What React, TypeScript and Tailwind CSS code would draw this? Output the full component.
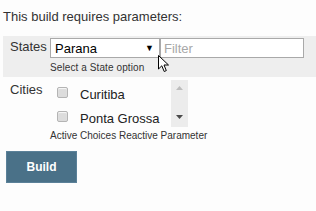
import React from "react";

function Checkbox() {
  return (
    <span className="inline-block w-[11px] h-[11px] rounded-[2px] border border-[#b4b4b4] bg-[#dcdcdc] shadow-[inset_0_1px_1px_rgba(255,255,255,0.8)]" />
  );
}

export default function App() {
  return (
    <div className="relative w-[316px] h-[211px] bg-[#fdfdfd] text-[#333] overflow-hidden" style={{ fontFamily: '"Liberation Sans", Arial, sans-serif' }}>
      <div className="pl-[3px] pt-[9px] text-[13px] leading-[15px] text-[#333]">This build requires parameters:</div>
      <div className="ml-[3px] mt-[12px] h-[41px] bg-[#eeeeee] flex pt-[2px]">
        <div className="w-[47px] pl-[7px] text-[13px] leading-[15px] pt-[1px]">States</div>
        <div className="flex flex-col">
          <div className="flex">
            <div className="w-[110px] h-[20px] bg-white border border-[#a9a9a9] flex items-center pl-[4px] pr-[5px] justify-between">
              <span className="text-[13px] text-black leading-[15px]">Parana</span>
              <span className="text-[9px] text-black leading-none">▼</span>
            </div>
            <div className="w-[144px] h-[20px] bg-white border border-[#a9a9a9] flex items-center pl-[3px]">
              <span className="text-[13px] text-[#a8a8a8] leading-[15px]">Filter</span>
            </div>
          </div>
          <div className="text-[10px] leading-[12px] mt-[4px] text-[#333] tracking-[0.1px]">Select a State option</div>
        </div>
      </div>
      <div className="flex pt-[5px]">
        <div className="w-[50px] pl-[10px] text-[13px] leading-[15px]">Cities</div>
        <div className="flex flex-col">
          <div className="flex h-[47px] mt-[-2px]">
            <div className="w-[121px] flex flex-col pl-[7px] pt-[6px] gap-[12px]">
              <div className="flex items-center gap-[12px] h-[12px]">
                <Checkbox />
                <span className="text-[13px] leading-[15px] text-[#222] mt-[5px]">Curitiba</span>
              </div>
              <div className="flex items-center gap-[12px] h-[12px]">
                <Checkbox />
                <span className="text-[13px] leading-[15px] text-[#222] mt-[5px]">Ponta Grossa</span>
              </div>
            </div>
            <div className="w-[17px] h-[47px] bg-[#ececec] flex flex-col items-center justify-between pt-[6px] pb-[8px]">
              <svg width="7" height="4" viewBox="0 0 7 4"><path d="M3.5 0 L7 4 L0 4 Z" fill="#bdbdbd" /></svg>
              <svg width="7" height="4" viewBox="0 0 7 4"><path d="M0 0 L7 0 L3.5 4 Z" fill="#4a4a4a" /></svg>
            </div>
          </div>
          <div className="text-[10px] leading-[12px] mt-[3px] text-[#333]">Active Choices Reactive Parameter</div>
        </div>
      </div>
      <div className="pl-[6px] mt-[9px]">
        <button className="w-[71px] h-[32px] bg-[#4a7188] border border-[#5b8199] text-white font-bold text-[12px]">Build</button>
      </div>
      <svg className="absolute left-[158px] top-[55px]" width="12" height="18" viewBox="0 0 12 18">
        <path d="M0.5 0.5 L0.5 14 L3.8 10.8 L6.2 16.5 L8.3 15.6 L6 10 L10.5 10 Z" fill="white" stroke="black" strokeWidth="1" strokeLinejoin="miter" />
      </svg>
    </div>
  );
}
